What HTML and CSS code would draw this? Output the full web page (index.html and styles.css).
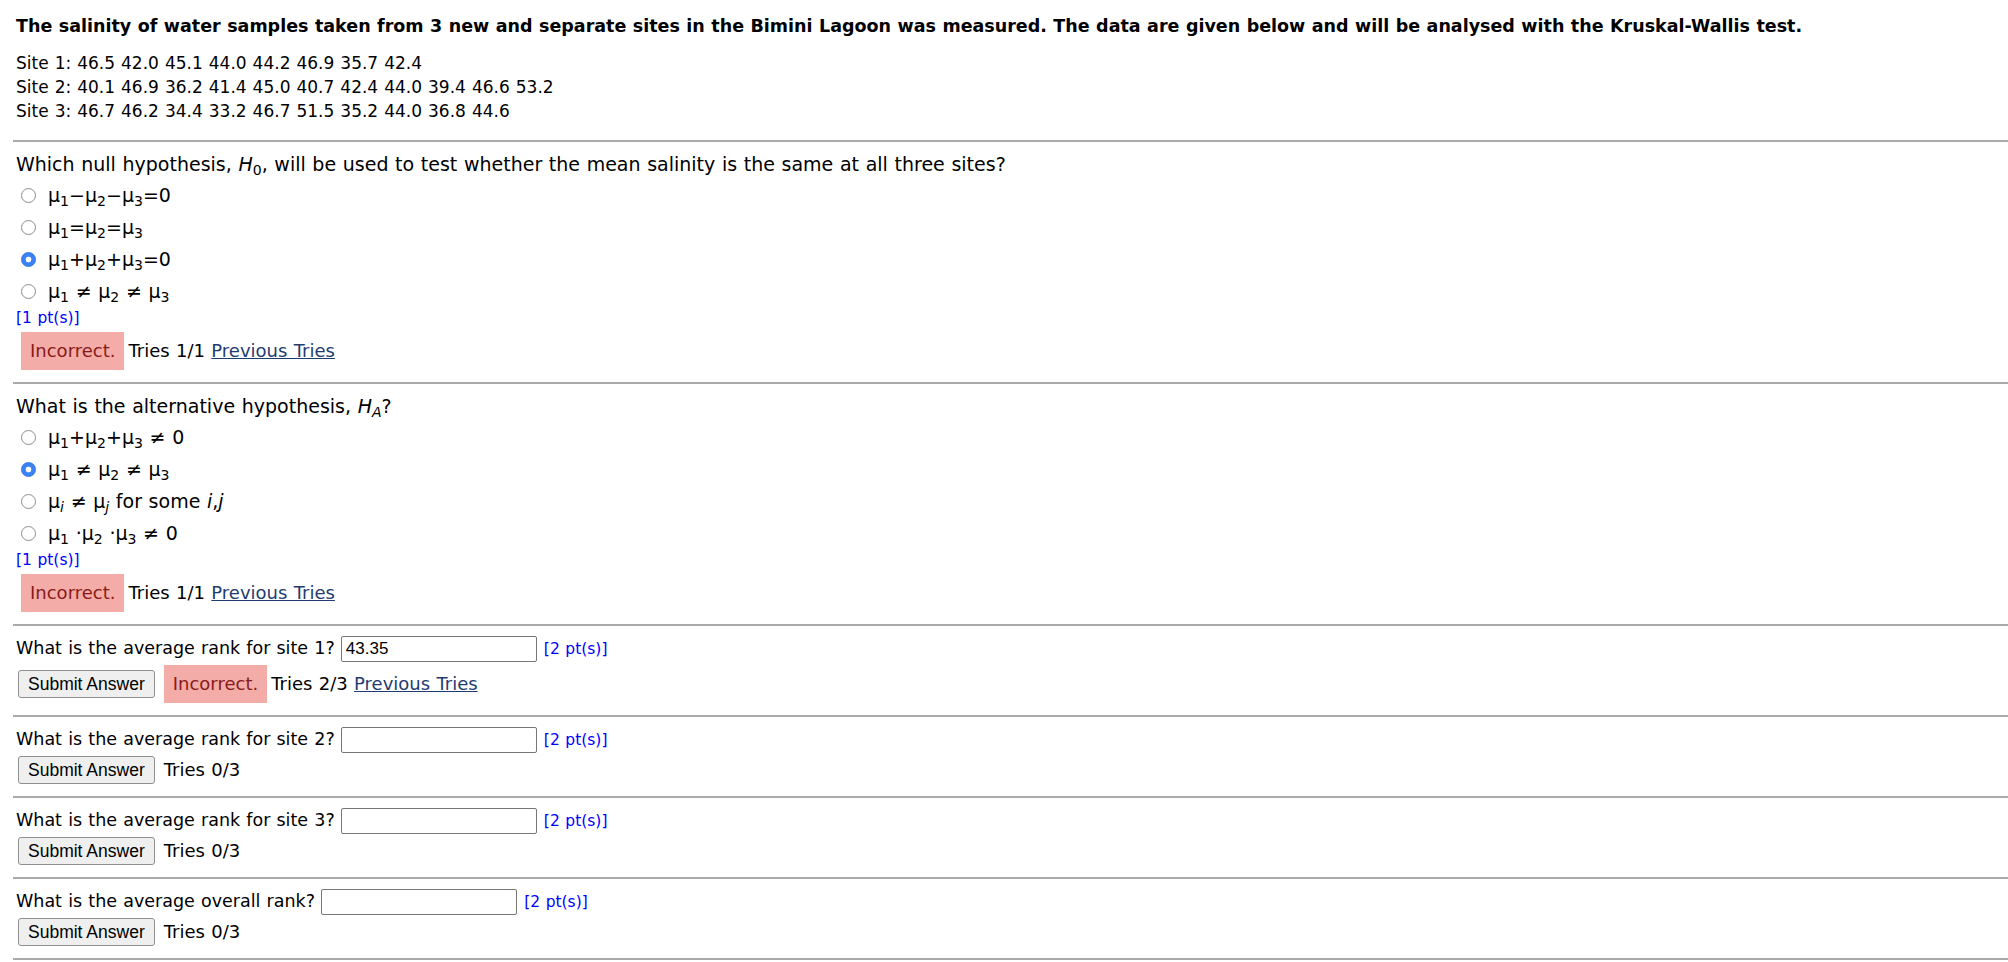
FILE: index.html
```html
<!DOCTYPE html>
<html lang="en">

<head>
  <meta charset="UTF-8">
  <title>Kruskal-Wallis - Bimini Lagoon</title>
  <link rel="stylesheet" href="styles.css">
</head>

<body>
  <div class="problem">
    <p class="intro">The salinity of water samples taken from 3 new and separate sites in the Bimini Lagoon was measured. The data are given below and will be analysed with the Kruskal-Wallis test.</p>
    <p class="data">
      Site 1: 46.5 42.0 45.1 44.0 44.2 46.9 35.7 42.4<br>
      Site 2: 40.1 46.9 36.2 41.4 45.0 40.7 42.4 44.0 39.4 46.6 53.2<br>
      Site 3: 46.7 46.2 34.4 33.2 46.7 51.5 35.2 44.0 36.8 44.6
    </p>

    <hr>
    <div class="part part-choice">
      <div class="question">Which null hypothesis, <i>H</i><sub>0</sub>, will be used to test whether the mean salinity is the same at all three sites?</div>
      <div class="options">
        <label class="option"><input type="radio" name="h0" class="radio"><span>μ<sub>1</sub>−μ<sub>2</sub>−μ<sub>3</sub>=0</span></label>
        <label class="option"><input type="radio" name="h0" class="radio"><span>μ<sub>1</sub>=μ<sub>2</sub>=μ<sub>3</sub></span></label>
        <label class="option"><input type="radio" name="h0" class="radio" checked><span>μ<sub>1</sub>+μ<sub>2</sub>+μ<sub>3</sub>=0</span></label>
        <label class="option"><input type="radio" name="h0" class="radio"><span>μ<sub>1</sub> ≠ μ<sub>2</sub> ≠ μ<sub>3</sub></span></label>
      </div>
      <div class="points">[1 pt(s)]</div>
      <div class="status status-choice">
        <span class="incorrect">Incorrect.</span>
        <span class="tries">Tries 1/1 <a href="#">Previous Tries</a></span>
      </div>
    </div>

    <hr>
    <div class="part part-choice">
      <div class="question">What is the alternative hypothesis, <i>H</i><sub><i>A</i></sub>?</div>
      <div class="options">
        <label class="option"><input type="radio" name="ha" class="radio"><span>μ<sub>1</sub>+μ<sub>2</sub>+μ<sub>3</sub> ≠ 0</span></label>
        <label class="option"><input type="radio" name="ha" class="radio" checked><span>μ<sub>1</sub> ≠ μ<sub>2</sub> ≠ μ<sub>3</sub></span></label>
        <label class="option"><input type="radio" name="ha" class="radio"><span>μ<sub><i>i</i></sub> ≠ μ<sub><i>j</i></sub> for some <i>i</i>,<i>j</i></span></label>
        <label class="option"><input type="radio" name="ha" class="radio"><span>μ<sub>1</sub> ·μ<sub>2</sub> ·μ<sub>3</sub> ≠ 0</span></label>
      </div>
      <div class="points">[1 pt(s)]</div>
      <div class="status status-choice">
        <span class="incorrect">Incorrect.</span>
        <span class="tries">Tries 1/1 <a href="#">Previous Tries</a></span>
      </div>
    </div>

    <hr>
    <div class="part part-entry">
      <div class="entry-row">
        <label>What is the average rank for site 1? <input type="text" class="answer" value="43.35"></label>
        <span class="points">[2 pt(s)]</span>
      </div>
      <div class="status">
        <button class="submit">Submit Answer</button>
        <span class="incorrect">Incorrect.</span>
        <span class="tries">Tries 2/3 <a href="#">Previous Tries</a></span>
      </div>
    </div>

    <hr>
    <div class="part part-entry">
      <div class="entry-row">
        <label>What is the average rank for site 2? <input type="text" class="answer"></label>
        <span class="points">[2 pt(s)]</span>
      </div>
      <div class="status">
        <button class="submit">Submit Answer</button>
        <span class="tries">Tries 0/3</span>
      </div>
    </div>

    <hr>
    <div class="part part-entry">
      <div class="entry-row">
        <label>What is the average rank for site 3? <input type="text" class="answer"></label>
        <span class="points">[2 pt(s)]</span>
      </div>
      <div class="status">
        <button class="submit">Submit Answer</button>
        <span class="tries">Tries 0/3</span>
      </div>
    </div>

    <hr>
    <div class="part part-entry">
      <div class="entry-row">
        <label>What is the average overall rank? <input type="text" class="answer"></label>
        <span class="points">[2 pt(s)]</span>
      </div>
      <div class="status">
        <button class="submit">Submit Answer</button>
        <span class="tries">Tries 0/3</span>
      </div>
    </div>
    <hr>
  </div>
</body>
</html>
```

FILE: styles.css
```css
html {
  background-color: white;
  color: black;
}

body {
  margin: 0;
  padding: 14px 0 0 16px;
  font-family: "DejaVu Sans", Verdana, sans-serif;
  font-size: 17.5px;
  line-height: 24px;
  word-spacing: 0.6px;
}

p {
  margin: 0;
}

.intro {
  font-size: 17.5px;
  font-weight: bold;
  letter-spacing: 0;
  word-spacing: 0.4px;
}

.data {
  margin-top: 13px;
  margin-bottom: 17px;
  font-size: 17px;
}

hr {
  height: 0;
  margin: 0 0 0 -3px;
  border: 0;
  border-top: 2px solid #aaaaaa;
}

sub {
  font-size: 0.74em;
  line-height: 0;
  vertical-align: -0.32em;
}

.part {
  padding-top: 10px;
}

.part-choice {
  padding-bottom: 12px;
}

.part-entry {
  padding-bottom: 12px;
}

.question {
  font-size: 19px;
}

.options {
  margin-top: 3px;
}

.option {
  display: flex;
  align-items: center;
  height: 32px;
  font-size: 19px;
}

.radio {
  appearance: none;
  -webkit-appearance: none;
  width: 15px;
  height: 15px;
  margin: 0 12px 0 5px;
  border: 1px solid #8d8d8d;
  border-radius: 50%;
  background: white;
  box-sizing: border-box;
}

.radio:checked {
  border: 1px solid #2f74e8;
  background: radial-gradient(circle, white 0 2.6px, #3b82f6 3.2px);
}

.points {
  color: #0000ff;
  font-size: 15.5px;
  line-height: 22px;
}

.status {
  display: flex;
  align-items: center;
  margin-top: 3px;
  font-size: 18px;
}

.status-choice {
  margin-left: 5px;
}

.incorrect {
  display: inline-block;
  padding: 7px 9px;
  background: #f3aca8;
  color: #8a1a1a;
  margin-right: 4px;
}

.tries a {
  color: #1f3c71;
}

.entry-row {
  display: flex;
  align-items: center;
  height: 26px;
}

.entry-row .points {
  margin-left: 7px;
}

.answer {
  width: 196px;
  height: 26px;
  box-sizing: border-box;
  margin: 0;
  padding: 0 4px;
  border: 1px solid #767676;
  border-radius: 2px;
  font-family: "Liberation Sans", Arial, sans-serif;
  font-size: 17px;
  vertical-align: middle;
}

.submit {
  height: 28px;
  margin: 0 9px 0 2px;
  padding: 0 9px;
  border: 1px solid #8f8f8f;
  border-radius: 3px;
  background: #efefef;
  font-family: "Liberation Sans", Arial, sans-serif;
  font-size: 17.5px;
  word-spacing: 0;
  color: black;
}
```
